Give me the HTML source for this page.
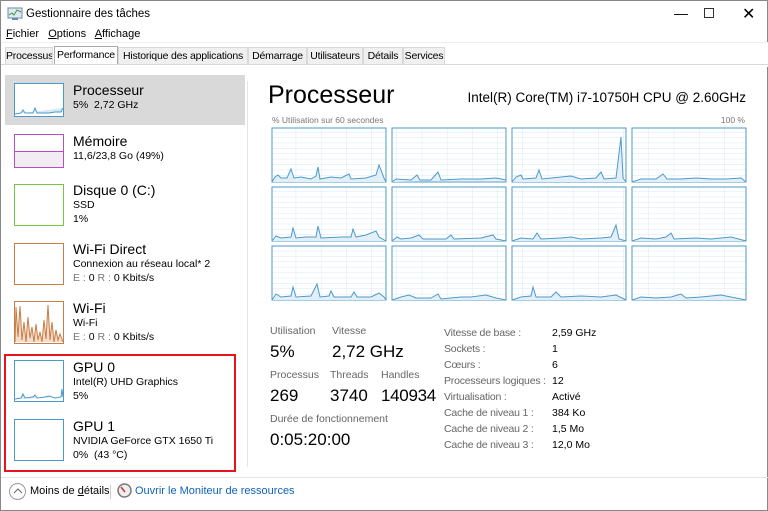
<!DOCTYPE html>
<html><head><meta charset="utf-8"><style>
*{margin:0;padding:0;box-sizing:border-box}
body{width:768px;height:511px;overflow:hidden;background:#fff;font-family:"Liberation Sans","DejaVu Sans",sans-serif;color:#000;position:relative;border:1px solid #888}
.a{position:absolute;white-space:nowrap}
.tab{position:absolute;top:46px;height:18px;font-size:10.5px;line-height:17px;text-align:center;background:#f0f0f0;border:1px solid #d9d9d9;border-bottom:none;overflow:hidden;letter-spacing:-0.2px}
.th{position:absolute;left:13px;width:50px;border:1px solid}
.t1{font-size:14px}
.t2{font-size:10.5px}
.g{color:#777}
.lab{font-size:10.5px;color:#666}
.big{font-size:17px}
</style></head><body>
<svg class="a" style="left:6px;top:6px" width="16" height="14"><rect x="1" y="1" width="14" height="10" fill="#dfe9f1" stroke="#6b8ca5"/><polyline points="2,8 5,6 7,8 10,3 14,5" fill="none" stroke="#3a9a3a"/><rect x="5" y="11" width="6" height="2" fill="#6b8ca5"/></svg>
<div class="a" style="left:25px;top:7px;font-size:11.5px">Gestionnaire des tâches</div>
<div class="a" style="left:673px;top:4px;font-size:14px">—</div>
<div class="a" style="left:703px;top:7px;width:10px;height:10px;border:1px solid #333"></div>
<div class="a" style="left:741px;top:3px;font-size:16px">✕</div>
<div class="a" style="left:5px;top:27px;font-size:11px"><u>F</u>ichier&nbsp;&nbsp; <u>O</u>ptions&nbsp;&nbsp; <u>A</u>ffichage</div>
<div class="a" style="left:0;top:41px;width:768px;height:25px;background:#fff;border-top:1px solid #eee"></div>
<div class="tab" style="left:4px;width:48px">Processus</div>
<div class="tab" style="left:53px;width:64px;background:#fff;border-color:#aaa;height:19px;top:45px">Performance</div>
<div class="tab" style="left:117px;width:130px">Historique des applications</div>
<div class="tab" style="left:247px;width:59px">Démarrage</div>
<div class="tab" style="left:306px;width:56px">Utilisateurs</div>
<div class="tab" style="left:362px;width:40px">Détails</div>
<div class="tab" style="left:402px;width:42px">Services</div>
<div class="a" style="left:0;top:63px;width:768px;height:1px;background:#d9d9d9"></div>
<div class="a" style="left:246px;top:80px;width:1px;height:386px;background:#e5e5e5"></div>

<div class="a" style="left:4px;top:74px;width:240px;height:50px;background:#d9d9d9"></div>
<div class="th" style="top:82px;height:34px;border-color:#4d9ac9;background:#fff"><svg width="48" height="32"><polyline points="0,30 6,29 8,26 10,29 18,29 20,24 22,29 34,29 40,28 46,28 48,24" fill="#d7e8f4" stroke="#4d9ac9"/></svg></div>
<div class="a t1" style="left:72px;top:81px">Processeur</div>
<div class="a t2" style="left:72px;top:98px">5%&nbsp; 2,72 GHz</div>

<div class="th" style="top:133px;height:34px;border-color:#b350c4;background:linear-gradient(#fff 50%,#f1edf2 50%)"><div style="position:absolute;top:16px;left:0;right:0;height:1px;background:#b350c4"></div></div>
<div class="a t1" style="left:72px;top:132px">Mémoire</div>
<div class="a t2" style="left:72px;top:149px">11,6/23,8 Go (49%)</div>

<div class="th" style="top:183px;height:42px;border-color:#77c442"></div>
<div class="a t1" style="left:72px;top:181px">Disque 0 (C:)</div>
<div class="a t2" style="left:72px;top:198px">SSD</div>
<div class="a t2" style="left:72px;top:212px">1%</div>

<div class="th" style="top:242px;height:42px;border-color:#c97c45"></div>
<div class="a t1" style="left:72px;top:240px">Wi-Fi Direct</div>
<div class="a t2" style="left:72px;top:257px">Connexion au réseau local* 2</div>
<div class="a t2" style="left:72px;top:271px"><span class="g">E :</span> 0 <span class="g">R :</span> 0 Kbits/s</div>

<div class="th" style="top:300px;height:43px;border-color:#c97c45"><svg width="48" height="41"><polyline points="0,40 1,5 3,35 5,4 7,38 9,20 11,40 13,15 15,36 17,25 19,40 21,22 23,38 25,30 27,40 29,18 31,37 33,3 35,38 37,20 39,40 41,28 43,38 45,32 48,40" fill="#f3dccb" stroke="#c97c45"/></svg></div>
<div class="a t1" style="left:72px;top:299px">Wi-Fi</div>
<div class="a t2" style="left:72px;top:316px">Wi-Fi</div>
<div class="a t2" style="left:72px;top:330px"><span class="g">E :</span> 0 <span class="g">R :</span> 0 Kbits/s</div>

<div class="th" style="top:359px;height:42px;border-color:#4d9ac9"><svg width="48" height="40"><polyline points="0,38 6,37 8,33 10,37 18,36 20,34 22,37 30,36 34,35 40,37 46,36 47,28 48,36" fill="#d7e8f4" stroke="#4d9ac9"/></svg></div>
<div class="a t1" style="left:72px;top:358px">GPU 0</div>
<div class="a t2" style="left:72px;top:375px">Intel(R) UHD Graphics</div>
<div class="a t2" style="left:72px;top:389px">5%</div>

<div class="th" style="top:418px;height:42px;border-color:#4d9ac9"></div>
<div class="a t1" style="left:72px;top:417px">GPU 1</div>
<div class="a t2" style="left:72px;top:434px">NVIDIA GeForce GTX 1650 Ti</div>
<div class="a t2" style="left:72px;top:448px">0%&nbsp; (43 °C)</div>

<div class="a" style="left:3px;top:353px;width:232px;height:118px;border:2px solid #e8141b"></div>

<div class="a" style="left:0;top:476px;width:768px;height:1px;background:#e5e5e5"></div>
<div class="a" style="left:8px;top:482px;width:17px;height:17px;border:1px solid #999;border-radius:50%"></div>
<svg class="a" style="left:11px;top:486px" width="12" height="8"><polyline points="2,6 6,2 10,6" fill="none" stroke="#666"/></svg>
<div class="a" style="left:29px;top:484px;font-size:11px">Moins de <u>d</u>étails</div>
<div class="a" style="left:109px;top:484px;width:1px;height:14px;background:#ccc"></div>
<svg class="a" style="left:116px;top:482px" width="15" height="15"><circle cx="7.5" cy="7.5" r="6.5" fill="#eee" stroke="#777" stroke-width="1.5"/><line x1="4" y1="4" x2="8" y2="9" stroke="#c33" stroke-width="1.5"/></svg>
<div class="a" style="left:134px;top:484px;font-size:11px;color:#0f63b5">Ouvrir le Moniteur de ressources</div>

<div class="a" style="left:267px;top:80px;font-size:25px">Processeur</div>
<div class="a" style="right:21px;top:89px;font-size:13.5px">Intel(R) Core(TM) i7-10750H CPU @ 2.60GHz</div>
<div class="a" style="left:271px;top:114px;font-size:8.5px;color:#777">% Utilisation sur 60 secondes</div>
<div class="a" style="right:22px;top:114px;font-size:8.5px;color:#777">100 %</div>

<svg class="a" style="left:270px;top:126px" width="478" height="176">
<defs><pattern id="gr" width="25.2" height="5.4" patternUnits="userSpaceOnUse" x="0" y="0"><path d="M25.2 0V5.4M0 5.4H25.2" fill="none" stroke="#d9eaf6" stroke-width="1"/></pattern></defs>
<g stroke="#4d9ac9">
<rect x="1" y="1" width="114" height="54" fill="url(#gr)"/>
<rect x="121" y="1" width="114" height="54" fill="url(#gr)"/>
<rect x="241" y="1" width="114" height="54" fill="url(#gr)"/>
<rect x="361" y="1" width="114" height="54" fill="url(#gr)"/>
<rect x="1" y="60" width="114" height="54" fill="url(#gr)"/>
<rect x="121" y="60" width="114" height="54" fill="url(#gr)"/>
<rect x="241" y="60" width="114" height="54" fill="url(#gr)"/>
<rect x="361" y="60" width="114" height="54" fill="url(#gr)"/>
<rect x="1" y="119" width="114" height="54" fill="url(#gr)"/>
<rect x="121" y="119" width="114" height="54" fill="url(#gr)"/>
<rect x="241" y="119" width="114" height="54" fill="url(#gr)"/>
<rect x="361" y="119" width="114" height="54" fill="url(#gr)"/>
</g>
<g fill="#e3eff8" stroke="#4d9ac9" stroke-width="1">
<polyline points="1,55 4,50 7,48 10,51 16,51 20,42 23,51 30,50 40,52 45,49 47,40 49,52 60,50 70,51 78,47 80,52 95,51 105,48 108,38 113,51 115,55"/>
<polyline points="121,55 125,52 140,53 146,48 149,53 160,53 167,45 170,53 190,52 210,52 225,51 235,53"/>
<polyline points="241,55 245,50 250,48 252,52 265,51 268,43 271,52 290,50 300,49 310,52 325,51 330,45 333,52 345,51 350,10 352,51 355,55"/>
<polyline points="361,55 370,52 385,52 392,47 396,52 410,52 425,51 440,52 455,52 470,51 475,55"/>
<polyline points="1,114 5,109 10,111 20,110 22,101 25,111 35,110 45,110 47,99 50,111 70,110 80,110 82,102 85,110 95,108 105,104 108,110 115,114"/>
<polyline points="121,114 126,110 130,112 140,111 148,108 152,112 175,112 180,108 183,112 210,111 222,108 225,112 235,114"/>
<polyline points="241,114 250,111 262,112 266,106 270,112 290,111 300,110 310,112 330,111 340,110 345,98 348,112 355,114"/>
<polyline points="361,114 370,111 385,112 395,110 400,106 403,112 425,111 440,112 460,110 475,114"/>
<polyline points="1,173 5,167 10,170 20,169 22,160 25,170 40,169 46,157 49,170 58,169 60,164 63,170 80,170 83,165 86,170 100,170 108,166 113,170 115,173"/>
<polyline points="121,173 130,170 138,168 145,171 160,171 167,167 170,172 190,170 200,170 215,168 225,171 235,173"/>
<polyline points="241,173 250,170 260,169 262,160 265,170 280,170 285,165 290,170 310,169 330,170 345,168 355,173"/>
<polyline points="361,173 370,170 385,171 400,170 410,167 415,171 430,170 450,168 475,173"/>
</g>
</svg>

<div class="a lab" style="left:269px;top:324px">Utilisation</div>
<div class="a lab" style="left:331px;top:324px">Vitesse</div>
<div class="a big" style="left:269px;top:341px">5%</div>
<div class="a big" style="left:331px;top:341px">2,72 GHz</div>
<div class="a lab" style="left:269px;top:368px">Processus</div>
<div class="a lab" style="left:329px;top:368px">Threads</div>
<div class="a lab" style="left:380px;top:368px">Handles</div>
<div class="a big" style="left:269px;top:385px">269</div>
<div class="a big" style="left:329px;top:385px">3740</div>
<div class="a big" style="left:380px;top:385px;letter-spacing:-0.3px">140934</div>
<div class="a lab" style="left:269px;top:412px">Durée de fonctionnement</div>
<div class="a big" style="left:269px;top:429px">0:05:20:00</div>

<div class="a lab" style="left:443px;top:324px;line-height:16px;letter-spacing:-0.2px">Vitesse de base :<br>Sockets :<br>Cœurs :<br>Processeurs logiques :<br>Virtualisation :<br>Cache de niveau 1 :<br>Cache de niveau 2 :<br>Cache de niveau 3 :</div>
<div class="a" style="left:551px;top:324px;line-height:16px;font-size:10.5px">2,59 GHz<br>1<br>6<br>12<br>Activé<br>384 Ko<br>1,5 Mo<br>12,0 Mo</div>
</body></html>
